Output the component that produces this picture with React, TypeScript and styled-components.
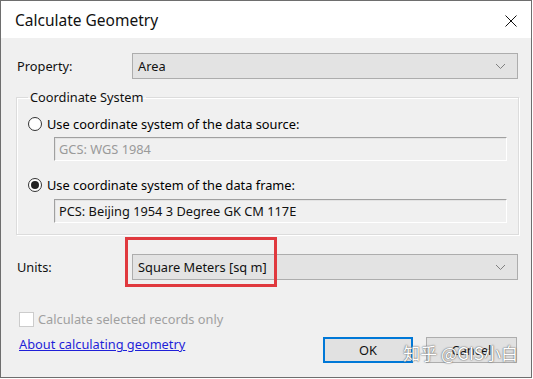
import React from "react";
import styled, { createGlobalStyle } from "styled-components";

const GlobalStyle = createGlobalStyle`
  html, body {
    margin: 0;
    padding: 0;
    background: #ffffff;
  }
  body {
    font-family: "Noto Sans", "Open Sans", "Noto Sans CJK SC", sans-serif;
    font-size: 12.8px;
    color: #000;
  }
`;

const Window = styled.div`
  width: 532px;
  height: 378px;
  box-sizing: border-box;
  border: 1px solid #6e6e6e;
  display: flex;
  flex-direction: column;
  background: #f0f0f0;
`;

const TitleBar = styled.div`
  height: 37px;
  flex: none;
  background: #fff;
  display: flex;
  align-items: center;
  justify-content: space-between;
  padding: 0 14px 0 14px;
`;

const Title = styled.div`
  font-size: 15.5px;
  color: #111;
  margin-top: 1px;
`;

const CloseBtn = styled.div`
  width: 12px;
  height: 12px;
  display: flex;
  margin-top: 2px;
`;

const Body = styled.div`
  flex: 1;
  padding: 15px 13px 0 16px;
  display: flex;
  flex-direction: column;
`;

const FieldRow = styled.div<{ $top?: number }>`
  display: flex;
  align-items: center;
  margin-top: ${(p) => p.$top ?? 0}px;
`;

const Label = styled.div`
  width: 115px;
  flex: none;
  color: #111;
`;

const ComboWrap = styled.div`
  position: relative;
  flex: 1;
`;

const Combo = styled.div`
  height: 26px;
  box-sizing: border-box;
  border: 1px solid #adadad;
  background: #e3e3e3;
  display: flex;
  align-items: center;
  justify-content: space-between;
  padding: 0 11px 0 5px;
  color: #111;
`;

const Highlight = styled.div`
  position: absolute;
  left: -7px;
  top: -17px;
  width: 152px;
  height: 50px;
  box-sizing: border-box;
  border: 3px solid #e0393e;
  pointer-events: none;
`;

const Group = styled.fieldset`
  margin: 10px -1px 0 -1px;
  padding: 10px 11px 11px 11px;
  border: 1px solid #dcdcdc;
  box-shadow: inset 1px 1px 0 #ffffff, 1px 1px 0 #ffffff;
  min-width: 0;
`;

const Legend = styled.legend`
  padding: 0 2px;
  line-height: 16px;
  color: #111;
`;

const OptionRow = styled.div<{ $top?: number }>`
  display: flex;
  align-items: center;
  height: 18px;
  margin-top: ${(p) => p.$top ?? 0}px;
`;

const Radio = styled.span<{ $checked?: boolean }>`
  width: 14px;
  height: 14px;
  box-sizing: border-box;
  border-radius: 50%;
  border: 1px solid #333;
  background: #fff;
  display: flex;
  align-items: center;
  justify-content: center;
  margin-right: 5px;
  &::after {
    content: "";
    width: 8px;
    height: 8px;
    border-radius: 50%;
    background: ${(p) => (p.$checked ? "#222" : "transparent")};
  }
`;

const TextBox = styled.div<{ $disabled?: boolean; $top?: number }>`
  margin: ${(p) => p.$top ?? 0}px 0 0 26px;
  height: 24px;
  box-sizing: border-box;
  border-top: 1px solid #a0a0a0;
  border-left: 1px solid #a0a0a0;
  border-right: 1px solid #ffffff;
  border-bottom: 1px solid #ffffff;
  box-shadow: inset 1px 1px 0 #e3e3e3;
  background: #f0f0f0;
  display: flex;
  align-items: center;
  padding-left: 4px;
  color: ${(p) => (p.$disabled ? "#9a9a9a" : "#111")};
`;

const CheckRow = styled.div`
  display: flex;
  align-items: center;
  height: 18px;
  margin-top: 30px;
  margin-left: 2px;
  color: #a0a0a0;
`;

const CheckBox = styled.span`
  width: 15px;
  height: 15px;
  box-sizing: border-box;
  border: 1px solid #cccccc;
  background: #ffffff;
  margin-right: 4px;
`;

const BottomRow = styled.div`
  display: flex;
  align-items: flex-start;
  margin-top: 8px;
`;

const HelpLink = styled.a`
  line-height: 16px;
  margin-left: 2px;
  color: #1f1fd8;
  text-decoration: underline;
  cursor: pointer;
`;

const ButtonBar = styled.div`
  margin-left: auto;
  margin-top: 1px;
  margin-right: 1px;
  display: flex;
  gap: 13px;
  position: relative;
`;

const Button = styled.div<{ $default?: boolean }>`
  width: ${(p) => (p.$default ? 90 : 91)}px;
  height: 26px;
  box-sizing: border-box;
  border: ${(p) => (p.$default ? "2px solid #0078d7" : "1px solid #adadad")};
  background: #e1e1e1;
  display: flex;
  align-items: center;
  justify-content: center;
  color: #111;
`;

const Watermark = styled.div`
  position: absolute;
  right: -1px;
  top: 3px;
  font-family: "Noto Sans CJK SC", "Noto Sans", sans-serif;
  font-size: 17px;
  color: #ffffff;
  text-shadow: 0 0 1px #555, 0 0 2px #777;
  white-space: nowrap;
  pointer-events: none;
`;

const Chevron = () => (
  <svg width="11" height="7" viewBox="0 0 11 7">
    <path d="M1 1 L5.5 5.5 L10 1" fill="none" stroke="#808080" strokeWidth="1" />
  </svg>
);

export default function App() {
  return (
    <>
      <GlobalStyle />
      <Window>
        <TitleBar>
          <Title>Calculate Geometry</Title>
          <CloseBtn>
            <svg width="12" height="12" viewBox="0 0 12 12">
              <path d="M0.5 0.5 L11.5 11.5 M11.5 0.5 L0.5 11.5" stroke="#111" strokeWidth="1" />
            </svg>
          </CloseBtn>
        </TitleBar>
        <Body>
          <FieldRow>
            <Label>Property:</Label>
            <ComboWrap>
              <Combo>
                <span>Area</span>
                <Chevron />
              </Combo>
            </ComboWrap>
          </FieldRow>

          <Group>
            <Legend>Coordinate System</Legend>
            <OptionRow>
              <Radio />
              <span>Use coordinate system of the data source:</span>
            </OptionRow>
            <TextBox $disabled $top={4}>GCS: WGS 1984</TextBox>
            <OptionRow $top={15}>
              <Radio $checked />
              <span>Use coordinate system of the data frame:</span>
            </OptionRow>
            <TextBox $top={5}>PCS: Beijing 1954 3 Degree GK CM 117E</TextBox>
          </Group>

          <FieldRow $top={19}>
            <Label>Units:</Label>
            <ComboWrap>
              <Combo>
                <span>Square Meters [sq m]</span>
                <Chevron />
              </Combo>
              <Highlight />
            </ComboWrap>
          </FieldRow>

          <CheckRow>
            <CheckBox />
            <span>Calculate selected records only</span>
          </CheckRow>

          <BottomRow>
            <HelpLink>About calculating geometry</HelpLink>
            <ButtonBar>
              <Button $default>OK</Button>
              <Button>Cancel</Button>
              <Watermark>知乎 @GIS小白</Watermark>
            </ButtonBar>
          </BottomRow>
        </Body>
      </Window>
    </>
  );
}
